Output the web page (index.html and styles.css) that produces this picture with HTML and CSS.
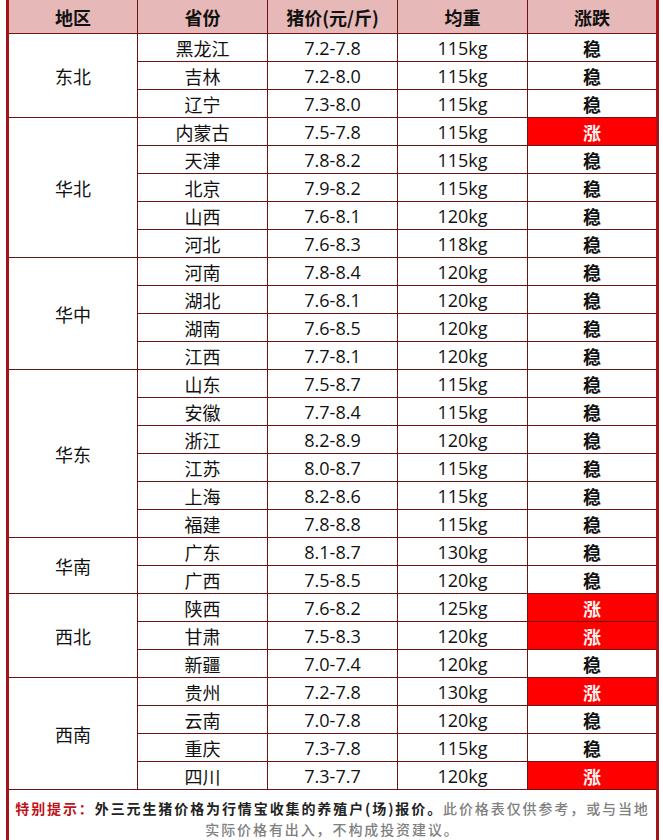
FILE: index.html
```html
<!DOCTYPE html>
<html lang="zh">
<head>
<meta charset="utf-8">
<link rel="stylesheet" href="styles.css">
</head>
<body>
<table class="price">
  <colgroup><col class="c"><col class="c"><col class="c"><col class="c"><col class="c"></colgroup>
  <thead>
    <tr class="head"><th class="first">地区</th><th>省份</th><th>猪价(元/斤)</th><th>均重</th><th class="last">涨跌</th></tr>
  </thead>
  <tbody>
    <tr><td class="region first" rowspan="3">东北</td><td>黑龙江</td><td class="num">7.2-7.8</td><td class="num">115kg</td><td class="st last">稳</td></tr>
    <tr><td>吉林</td><td class="num">7.2-8.0</td><td class="num">115kg</td><td class="st last">稳</td></tr>
    <tr><td>辽宁</td><td class="num">7.3-8.0</td><td class="num">115kg</td><td class="st last">稳</td></tr>

    <tr><td class="region first" rowspan="5">华北</td><td>内蒙古</td><td class="num">7.5-7.8</td><td class="num">115kg</td><td class="st up last">涨</td></tr>
    <tr><td>天津</td><td class="num">7.8-8.2</td><td class="num">115kg</td><td class="st last">稳</td></tr>
    <tr><td>北京</td><td class="num">7.9-8.2</td><td class="num">115kg</td><td class="st last">稳</td></tr>
    <tr><td>山西</td><td class="num">7.6-8.1</td><td class="num">120kg</td><td class="st last">稳</td></tr>
    <tr><td>河北</td><td class="num">7.6-8.3</td><td class="num">118kg</td><td class="st last">稳</td></tr>

    <tr><td class="region first" rowspan="4">华中</td><td>河南</td><td class="num">7.8-8.4</td><td class="num">120kg</td><td class="st last">稳</td></tr>
    <tr><td>湖北</td><td class="num">7.6-8.1</td><td class="num">120kg</td><td class="st last">稳</td></tr>
    <tr><td>湖南</td><td class="num">7.6-8.5</td><td class="num">120kg</td><td class="st last">稳</td></tr>
    <tr><td>江西</td><td class="num">7.7-8.1</td><td class="num">120kg</td><td class="st last">稳</td></tr>

    <tr><td class="region first" rowspan="6">华东</td><td>山东</td><td class="num">7.5-8.7</td><td class="num">115kg</td><td class="st last">稳</td></tr>
    <tr><td>安徽</td><td class="num">7.7-8.4</td><td class="num">115kg</td><td class="st last">稳</td></tr>
    <tr><td>浙江</td><td class="num">8.2-8.9</td><td class="num">120kg</td><td class="st last">稳</td></tr>
    <tr><td>江苏</td><td class="num">8.0-8.7</td><td class="num">115kg</td><td class="st last">稳</td></tr>
    <tr><td>上海</td><td class="num">8.2-8.6</td><td class="num">115kg</td><td class="st last">稳</td></tr>
    <tr><td>福建</td><td class="num">7.8-8.8</td><td class="num">115kg</td><td class="st last">稳</td></tr>

    <tr><td class="region first" rowspan="2">华南</td><td>广东</td><td class="num">8.1-8.7</td><td class="num">130kg</td><td class="st last">稳</td></tr>
    <tr><td>广西</td><td class="num">7.5-8.5</td><td class="num">120kg</td><td class="st last">稳</td></tr>

    <tr><td class="region first" rowspan="3">西北</td><td>陕西</td><td class="num">7.6-8.2</td><td class="num">125kg</td><td class="st up last">涨</td></tr>
    <tr><td>甘肃</td><td class="num">7.5-8.3</td><td class="num">120kg</td><td class="st up last">涨</td></tr>
    <tr><td>新疆</td><td class="num">7.0-7.4</td><td class="num">120kg</td><td class="st last">稳</td></tr>

    <tr><td class="region first" rowspan="4">西南</td><td>贵州</td><td class="num">7.2-7.8</td><td class="num">130kg</td><td class="st up last">涨</td></tr>
    <tr><td>云南</td><td class="num">7.0-7.8</td><td class="num">120kg</td><td class="st last">稳</td></tr>
    <tr><td>重庆</td><td class="num">7.3-7.8</td><td class="num">115kg</td><td class="st last">稳</td></tr>
    <tr><td>四川</td><td class="num">7.3-7.7</td><td class="num">120kg</td><td class="st up last">涨</td></tr>

    <tr class="foot"><td colspan="5" class="note first last"><span class="lbl">特别提示：</span><span class="bold">外三元生猪价格为行情宝收集的养殖户(场)报价。</span><span class="gray">此价格表仅供参考，或与当地<br>实际价格有出入，不构成投资建议。</span></td></tr>
  </tbody>
</table>
</body>
</html>
```
FILE: styles.css
```css
html, body {
  margin: 0;
  padding: 0;
  background: #ffffff;
}
body {
  font-family: "Open Sans", "Noto Sans CJK SC", sans-serif;
  color: #111;
}
.price {
  margin-left: 6px;
  width: 653px;
  border-collapse: collapse;
  table-layout: fixed;
}
.price col.c {
  width: 130px;
}
.price th,
.price td {
  border: 1px solid #6a1414;
  text-align: center;
  vertical-align: middle;
  padding: 0;
  font-size: 18px;
  line-height: 22px;
}
.price th {
  height: 33px;
  border-top: none;
  background: #e6b8b7;
  font-family: "Noto Sans CJK SC", sans-serif;
  font-weight: 700;
  color: #111;
}
.price tbody tr {
  height: 28px;
}
.price td {
  font-family: "Noto Sans CJK SC", sans-serif;
  font-weight: 400;
  color: #111;
}
.price td.num {
  font-family: "Open Sans", "Noto Sans CJK SC", sans-serif;
}
.price td.st {
  font-weight: 700;
}
.price td.up {
  background: #ff0000;
  color: #fff4f4;
}
.price .first {
  border-left: 3px solid #a3141a;
}
.price .last {
  border-right: 3px solid #a3141a;
}
.price tr.foot {
  height: 50px;
}
.price td.note {
  border-bottom: none;
  font-size: 14px;
  line-height: 21px;
  letter-spacing: 1.9px;
  padding-top: 8px;
  vertical-align: top;
  font-family: "Noto Sans CJK SC", serif;
}
.note .lbl {
  color: #c0121a;
  font-weight: 700;
}
.note .bold {
  color: #222;
  font-weight: 700;
}
.note .gray {
  color: #808080;
  font-weight: 500;
}
```
